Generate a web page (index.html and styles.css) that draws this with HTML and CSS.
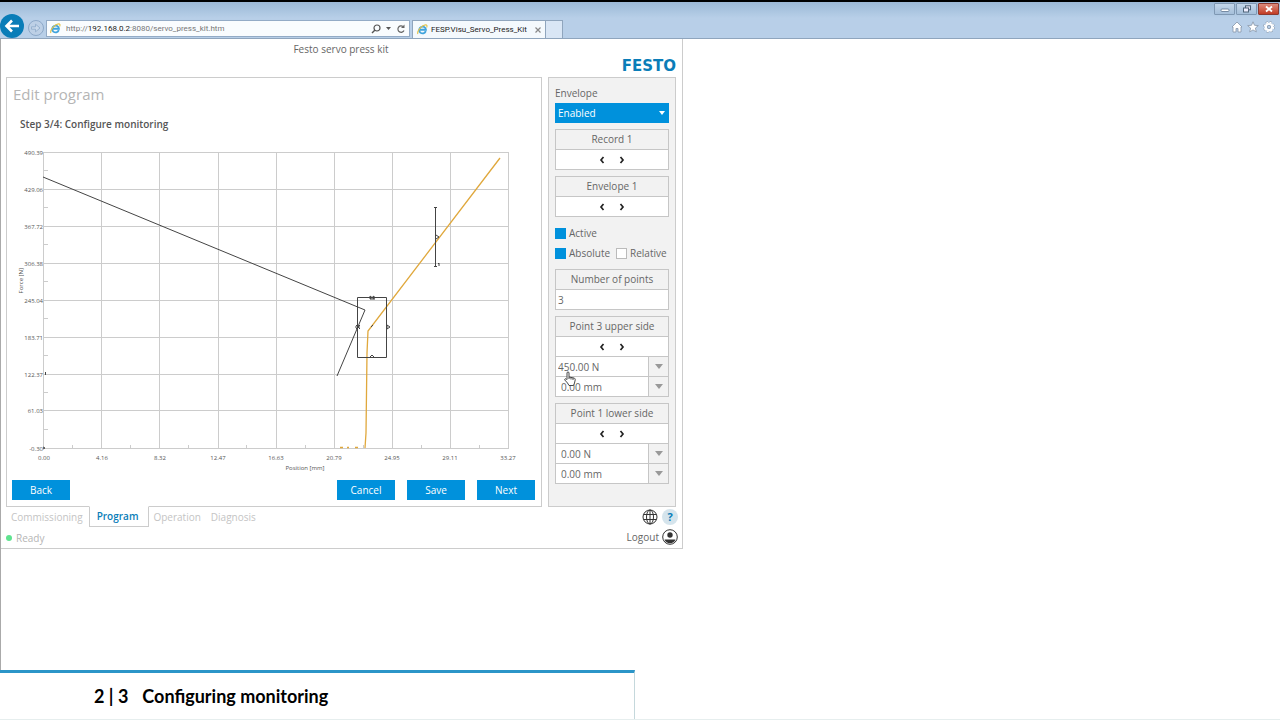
FILE: index.html
```html
<!DOCTYPE html>
<html lang="en">
<head>
    <meta charset="UTF-8">
    <meta name="viewport" content="width=device-width, initial-scale=1.0">
    <title>FESP.Visu_Servo_Press_Kit</title>
    <link rel="stylesheet" href="styles.css">
</head>
<body>
    <svg class="symbols" aria-hidden="true">
        <symbol id="ie" viewBox="0 0 12 12">
            <path d="M9.600 7.800A3.700 3.700 0 1 1 9.800 6.300H3" fill="none" stroke="#3fa3dc" stroke-width="2"/>
            <path d="M1 11C-.5 8 5 1.500 9 1c2-.3 2.300 1 1.500 2.800" fill="none" stroke="#e3c34a" stroke-width="1.200"/>
        </symbol>
        <symbol id="prev" viewBox="0 0 6 8">
            <path d="M4.500 1L2 4l2.500 3" fill="none" stroke="#222" stroke-width="1.700"/>
        </symbol>
        <symbol id="next" viewBox="0 0 6 8">
            <path d="M1.500 1L4 4 1.500 7" fill="none" stroke="#222" stroke-width="1.700"/>
        </symbol>
    </svg>

    <header class="browser">
        <nav class="browser-nav">
            <button type="button" class="nav-back" aria-label="Go back">
                <svg viewBox="0 0 24 24" width="24" height="24"><circle cx="12" cy="12" r="12" fill="#0a7db8"/><path d="M19 12H7M12 6.500L6.500 12l5.500 5.500" fill="none" stroke="#fff" stroke-width="2.600"/></svg>
            </button>
            <button type="button" class="nav-forward" aria-label="Go forward">
                <svg viewBox="0 0 18 18" width="18" height="18"><circle cx="9" cy="9" r="7.500" fill="#bdd0e6" stroke="#8da9c9"/><path d="M4.500 7.800h4V5.200L13 9l-4.500 3.800v-2.600h-4z" fill="#c9d9eb" stroke="#8da9c9" stroke-width=".8"/></svg>
            </button>
            <div class="address">
                <svg width="11" height="11"><use href="#ie"/></svg>
                <a class="url" href="#">http://<b>192.168.0.2</b>:8080/servo_press_kit.htm</a>
                <button type="button" aria-label="Search">
                    <svg viewBox="0 0 10 10" width="10" height="10"><circle cx="6" cy="4" r="3" fill="none" stroke="#555" stroke-width="1.200"/><path d="M4 6L1 9" stroke="#555" stroke-width="1.500"/></svg>
                </button>
                <button type="button" aria-label="Address list">
                    <svg viewBox="0 0 5 3" width="5" height="3"><path d="M0 0h5L2.500 3z" fill="#555"/></svg>
                </button>
                <button type="button" class="reload" aria-label="Refresh">
                    <svg viewBox="0 0 10 10" width="10" height="10"><path d="M8 6.500A3.200 3.200 0 1 1 7 2.500" fill="none" stroke="#666" stroke-width="1.200"/><path d="M8.500 .5v3.500H5z" fill="#666"/></svg>
                </button>
            </div>
            <div class="tab">
                <svg width="11" height="11"><use href="#ie"/></svg>
                <span class="tab-title">FESP.Visu_Servo_Press_Kit</span>
                <button type="button" aria-label="Close tab">
                    <svg viewBox="0 0 6 6" width="6" height="6"><path d="M.5.5l5 5M5.500.5l-5 5" stroke="#888" stroke-width="1.200"/></svg>
                </button>
            </div>
            <button type="button" class="new-tab" aria-label="New tab"></button>
        </nav>
        <div class="browser-side">
            <div class="window-buttons">
                <button type="button" aria-label="Minimize">
                    <svg viewBox="0 0 10 8" width="10" height="8"><rect x="1" y="4" width="8" height="2.500" rx="1" fill="#fff" stroke="#5d7590" stroke-width=".8"/></svg>
                </button>
                <button type="button" aria-label="Restore">
                    <svg viewBox="0 0 10 8" width="10" height="8"><rect x="3.500" y=".8" width="5" height="4" fill="#dde" stroke="#4f6479"/><rect x="1.500" y="3" width="5" height="4" fill="#eef" stroke="#4f6479"/></svg>
                </button>
                <button type="button" class="close" aria-label="Close">
                    <svg viewBox="0 0 8 8" width="8" height="8"><path d="M1 1.500l6 5M7 1.500l-6 5" stroke="#fff" stroke-width="1.800"/></svg>
                </button>
            </div>
            <div class="tools">
                <button type="button" aria-label="Home">
                    <svg viewBox="0 0 12 12" width="12" height="12"><path d="M6 1L1 6h1v5h3V7.500h2V11h3V6h1z" fill="#fff" stroke="#8796a8" stroke-width=".8"/></svg>
                </button>
                <button type="button" aria-label="Favorites">
                    <svg viewBox="0 0 12 12" width="12" height="12"><path d="M6 .8l1.500 3.500 3.800.3-2.900 2.500.9 3.800L6 8.900l-3.300 2 .9-3.800L.7 4.600l3.800-.3z" fill="#fff" stroke="#8796a8" stroke-width=".8"/></svg>
                </button>
                <button type="button" aria-label="Tools">
                    <svg viewBox="0 0 12 12" width="12" height="12"><circle cx="6" cy="6" r="4.500" fill="none" stroke="#8796a8" stroke-width="2.600" stroke-dasharray="2 1.530"/><circle cx="6" cy="6" r="3" fill="none" stroke="#fff" stroke-width="2.200"/><circle cx="6" cy="6" r="4.500" fill="none" stroke="#fff" stroke-width="1.500" stroke-dasharray="2 1.530"/><circle cx="6" cy="6" r="1.700" fill="#b6cde6" stroke="#8796a8" stroke-width=".8"/></svg>
                </button>
            </div>
        </div>
    </header>

    <main class="page">
        <div class="app">
            <header class="app-header">
                <h1>Festo servo press kit</h1>
                <div class="logo">FESTO</div>
            </header>

            <div class="panels">
                <section class="program">
                    <h2>Edit program</h2>
                    <h3>Step 3/4: Configure monitoring</h3>
                    <svg class="chart" viewBox="0 0 534 332" role="img" aria-label="Force over position">
                        <!-- grid -->
                        <path class="grid" d="M36.500 9v296M94.500 9v296M152.500 9v296M211.500 9v296M269.500 9v296M327.500 9v296M385.500 9v296M443.500 9v296M501.500 9v296"/>
                        <path class="grid" d="M36 9.500h466M36 46.500h466M36 83.500h466M36 120.500h466M36 157.500h466M36 194.500h466M36 231.500h466M36 267.500h466M36 305.500h466"/>
                        <path class="tick" d="M36 27.500h5M36 64.500h5M36 101.500h5M36 138.500h5M36 175.500h5M36 212.500h5M36 249.500h5M36 286.500h5"/>
                        <path class="tick" d="M65.500 305v-3M123.500 305v-3M181.500 305v-3M239.500 305v-3M298.500 305v-3M356.500 305v-3M414.500 305v-3M472.500 305v-3"/>
                        <!-- force axis -->
                        <g class="labels labels-y">
                            <text x="36" y="12">490.39</text>
                            <text x="36" y="49">429.06</text>
                            <text x="36" y="86">367.72</text>
                            <text x="36" y="123">306.38</text>
                            <text x="36" y="160">245.04</text>
                            <text x="36" y="197">183.71</text>
                            <text x="36" y="234">122.37</text>
                            <text x="36" y="270">61.03</text>
                            <text x="36" y="308">-0.30</text>
                            <text transform="translate(16 125) rotate(-90)">Force [N]</text>
                        </g>
                        <!-- position axis -->
                        <g class="labels labels-x">
                            <text x="37" y="317">0.00</text>
                            <text x="95" y="317">4.16</text>
                            <text x="153" y="317">8.32</text>
                            <text x="211" y="317">12.47</text>
                            <text x="269" y="317">16.63</text>
                            <text x="327" y="317">20.79</text>
                            <text x="385" y="317">24.95</text>
                            <text x="443" y="317">29.11</text>
                            <text x="501" y="317">33.27</text>
                            <text x="298" y="327">Position [mm]</text>
                        </g>
                        <!-- measured curve -->
                        <path class="curve" d="M493 15L361 188 360 210 359 290 358 305"/>
                        <path class="curve" d="M333 304.500h3M340 304.500h2M348 304.500h3"/>
                        <!-- envelope -->
                        <path class="limit" d="M36 34L358 167 330 233"/>
                        <!-- window -->
                        <path class="limit" d="M350.500 154.500h29v60h-29zM363 153l4 3M367 153l-4 3M363 156h5M363 153v3M367 153v3M349 182l4 4M353 182l-4 4M348 184h5M380 182l3 2-3 2zM363 214l2-2 2 2M364 184l2-2"/>
                        <!-- threshold -->
                        <path class="limit" d="M428.500 64v60M427 64.500h3M427 123.500h3M429 92l3 2-3 2M431 121l1-1v3M38.500 229v3M36 304l2 1-2 1"/>
                    </svg>
                    <div class="actions">
                        <button type="button" class="btn btn-back">Back</button>
                        <button type="button" class="btn">Cancel</button>
                        <button type="button" class="btn">Save</button>
                        <button type="button" class="btn">Next</button>
                    </div>
                </section>

                <aside class="settings">
                    <div class="envelope">
                        <label for="envelope">Envelope</label>
                        <div class="select">
                            <select id="envelope">
                                <option>Enabled</option>
                                <option>Disabled</option>
                            </select>
                        </div>
                    </div>

                    <div class="group">
                        <div class="group-title">Record 1</div>
                        <div class="stepper">
                            <button type="button" aria-label="Previous record"><svg width="6" height="8"><use href="#prev"/></svg></button>
                            <button type="button" aria-label="Next record"><svg width="6" height="8"><use href="#next"/></svg></button>
                        </div>
                    </div>

                    <div class="group">
                        <div class="group-title">Envelope 1</div>
                        <div class="stepper">
                            <button type="button" aria-label="Previous envelope"><svg width="6" height="8"><use href="#prev"/></svg></button>
                            <button type="button" aria-label="Next envelope"><svg width="6" height="8"><use href="#next"/></svg></button>
                        </div>
                    </div>

                    <div class="checks">
                        <label><input type="checkbox" checked>Active</label>
                        <label><input type="checkbox" checked>Absolute</label>
                        <label><input type="checkbox">Relative</label>
                    </div>

                    <div class="group">
                        <label class="group-title" for="points">Number of points</label>
                        <input type="text" id="points" class="value" value="3">
                    </div>

                    <div class="group">
                        <div class="group-title">Point 3 upper side</div>
                        <div class="stepper">
                            <button type="button" aria-label="Previous upper point"><svg width="6" height="8"><use href="#prev"/></svg></button>
                            <button type="button" aria-label="Next upper point"><svg width="6" height="8"><use href="#next"/></svg></button>
                        </div>
                        <div class="combo">
                            <input type="text" class="value" value="450.00 N" aria-label="Upper force">
                            <button type="button" aria-label="Upper force list"></button>
                            <svg class="cursor" viewBox="0 0 12 15" width="12" height="15"><path d="M3 8V2c0-1.500 2-1.500 2 0v4l5 1c1 .3 1.300 1 1.200 2l-.7 3-1 2.500H5L3.500 12 .8 9C.3 8 1.500 7.300 2.300 8l1 1M5 6v2M7 6.500v2M9 7v2" fill="#fff" stroke="#333" stroke-width=".9"/></svg>
                        </div>
                        <div class="combo">
                            <input type="text" class="value value-inset" value="0.00 mm" aria-label="Upper position">
                            <button type="button" aria-label="Upper position list"></button>
                        </div>
                    </div>

                    <div class="group">
                        <div class="group-title">Point 1 lower side</div>
                        <div class="stepper">
                            <button type="button" aria-label="Previous lower point"><svg width="6" height="8"><use href="#prev"/></svg></button>
                            <button type="button" aria-label="Next lower point"><svg width="6" height="8"><use href="#next"/></svg></button>
                        </div>
                        <div class="combo">
                            <input type="text" class="value value-inset" value="0.00 N" aria-label="Lower force">
                            <button type="button" aria-label="Lower force list"></button>
                        </div>
                        <div class="combo">
                            <input type="text" class="value value-inset" value="0.00 mm" aria-label="Lower position">
                            <button type="button" aria-label="Lower position list"></button>
                        </div>
                    </div>
                </aside>
            </div>

            <footer class="app-footer">
                <div class="footer-left">
                    <nav class="menu">
                        <a href="#">Commissioning</a>
                        <a href="#" class="active">Program</a>
                        <a href="#">Operation</a>
                        <a href="#">Diagnosis</a>
                    </nav>
                    <div class="status">Ready</div>
                </div>
                <div class="footer-right">
                    <div class="footer-icons">
                        <button type="button" aria-label="Language">
                            <svg viewBox="0 0 16 16" width="16" height="16"><g fill="none" stroke="#333"><circle cx="8" cy="8" r="7"/><ellipse cx="8" cy="8" rx="3.500" ry="7"/><path d="M8 1v14M1.500 5.500h13M1.500 10.500h13"/></g></svg>
                        </button>
                        <button type="button" class="help">?</button>
                    </div>
                    <a href="#" class="logout">Logout
                        <svg viewBox="0 0 16 16" width="16" height="16"><circle cx="8" cy="8" r="7.300" fill="#fff" stroke="#333"/><circle cx="8" cy="6" r="2.700" fill="#333"/><path d="M2.500 10.500h11A6 6 0 0 1 8 14.300a6 6 0 0 1-5.500-3.800z" fill="#333"/></svg>
                    </a>
                </div>
            </footer>
        </div>
    </main>

    <footer class="caption">
        <div class="caption-text"><span>2 | 3</span><span>Configuring monitoring</span></div>
    </footer>
</body>
</html>
```

FILE: styles.css
```css
* {
    box-sizing: border-box;
}
body {
    display: flex;
    flex-direction: column;
    min-height: 100vh;
    margin: 0;
    background: #fff;
    color: #666;
    font-family: "Open Sans", "Noto Sans", sans-serif;
    font-size: 10px;
    line-height: 16px;
}
button, input, select {
    margin: 0;
    padding: 0;
    border: 0;
    border-radius: 0;
    background: none;
    color: inherit;
    font: inherit;
}
button {
    cursor: pointer;
}
svg {
    display: block;
}
a {
    color: inherit;
    text-decoration: none;
}
h1, h2, h3 {
    margin: 0;
}
.symbols {
    position: absolute;
    width: 0;
    height: 0;
}

/* browser window */
.browser {
    display: flex;
    justify-content: space-between;
    height: 39px;
    border-top: 2px solid #000;
    border-bottom: 1px solid #8fa5bd;
    background: linear-gradient(#9db9d6, #a9c4df 8px, #b8cfe8 16px, #b8cfe8);
}
.browser-nav {
    display: flex;
    align-items: flex-end;
    flex: 1;
    min-width: 0;
}
.nav-forward {
    margin: 0 1px 1px 3px;
}
.address {
    display: flex;
    align-items: center;
    gap: 5px;
    flex: 0 1 364px;
    height: 17px;
    margin: 0 2px 1px 0;
    padding: 0 3px;
    border: 1px solid #93abc6;
    background: #f9fcfe;
    font-family: Roboto, sans-serif;
    font-size: 8px;
    min-width: 0;
}
.url {
    flex: 1;
    color: #777;
    white-space: nowrap;
    overflow: hidden;
}
.url b {
    color: #222;
    font-weight: normal;
}
.tab {
    display: flex;
    align-items: center;
    gap: 3px;
    flex: 0 1 134px;
    height: 18px;
    padding: 0 4px;
    border: 1px solid #8fa5bd;
    border-bottom: 0;
    background: #f4f9fd;
    color: #222;
    font-family: Roboto, sans-serif;
    font-size: 8px;
}
.tab-title {
    flex: 1;
    white-space: nowrap;
}
.new-tab {
    width: 17px;
    height: 18px;
    border: 1px solid #8fa5bd;
    border-width: 1px 1px 0 0;
    background: #d9e6f5;
}
.browser-side {
    display: flex;
    flex-direction: column;
    align-items: flex-end;
    gap: 6px;
    padding: 1px 1px 0 0;
}
.window-buttons {
    display: flex;
    gap: 1px;
}
.window-buttons button {
    display: flex;
    align-items: center;
    justify-content: center;
    width: 21px;
    height: 12px;
    border: 1px solid #7f98b3;
    border-radius: 1px;
    background: linear-gradient(#c3d6ea, #a5bfda);
}
.window-buttons .close {
    border-color: #8c3a30;
    background: linear-gradient(#dc8b7c, #c23c25);
}
.tools {
    display: flex;
    gap: 4px;
    padding-right: 4px;
}

/* visualisation */
.page {
    flex: 1;
    border-left: 1px solid #aaa;
}
.app {
    width: 100%;
    max-width: 682px;
    padding: 0 6px 0 5px;
    border: 1px solid #ccc;
    border-width: 0 1px 1px 0;
}
.app-header {
    padding-top: 2px;
}
h1 {
    font-size: 10px;
    font-weight: normal;
    line-height: 16px;
    text-align: center;
}
.logo {
    height: 20px;
    color: #0a7db8;
    font-family: "DejaVu Sans", sans-serif;
    font-size: 15px;
    font-weight: bold;
    line-height: 18px;
    text-align: right;
}
.panels {
    display: flex;
    gap: 6px;
}
.program {
    display: flex;
    flex-direction: column;
    flex: 1;
    min-width: 0;
    border: 1px solid #ccc;
}
h2 {
    padding: 5px 6px 0;
    color: #b5b5b5;
    font-size: 15px;
    font-weight: normal;
    line-height: 22px;
}
h3 {
    padding: 11px 13px 0;
    color: #555;
    font-size: 10px;
    font-weight: 600;
    line-height: 16px;
}
.chart {
    width: 100%;
    margin-top: 11px;
}
.grid, .tick {
    fill: none;
    stroke: #ccc;
}
.labels {
    fill: #555;
    font-size: 6px;
}
.labels-y {
    text-anchor: end;
}
.labels-x {
    text-anchor: middle;
}
.curve {
    fill: none;
    stroke: #e0a83c;
    stroke-width: 1.3;
}
.limit {
    fill: none;
    stroke: #444;
}
.actions {
    display: flex;
    gap: 12px;
    margin-top: auto;
    padding: 5px 6px 6px 5px;
}
.btn {
    width: 58px;
    height: 20px;
    background: #0091dc;
    color: #fff;
}
.btn-back {
    margin-right: auto;
}

/* settings column */
.settings {
    display: flex;
    flex-direction: column;
    gap: 6px;
    width: 128px;
    padding: 7px 6px 22px;
    border: 1px solid #ccc;
    background: #f2f2f2;
}
.envelope label {
    display: block;
    height: 18px;
}
.select {
    position: relative;
}
.select select {
    width: 100%;
    height: 20px;
    padding: 0 3px;
    appearance: none;
    background: #0091dc;
    color: #fff;
}
.select::after {
    content: "";
    position: absolute;
    top: 8px;
    right: 4px;
    border: 3px solid transparent;
    border-top: 4px solid #fff;
    border-bottom: 0;
    pointer-events: none;
}
.group {
    display: flex;
    flex-direction: column;
    gap: 1px;
    border: 1px solid #c6c6c6;
    background: #c6c6c6;
}
.group-title {
    height: 19px;
    background: #f2f2f2;
    line-height: 19px;
    text-align: center;
}
.stepper {
    display: flex;
    align-items: center;
    justify-content: center;
    gap: 14px;
    height: 19px;
    background: #fff;
}
.checks {
    display: flex;
    flex-wrap: wrap;
    column-gap: 6px;
}
.checks label {
    display: flex;
    align-items: center;
    gap: 3px;
    height: 20px;
}
.checks label:first-child {
    width: 100%;
}
.checks input {
    width: 11px;
    height: 11px;
    appearance: none;
    border: 1px solid #bbb;
    background: #fff;
}
.checks input:checked {
    border-color: #0091dc;
    background: #0091dc;
}
.value {
    width: 100%;
    min-width: 0;
    height: 19px;
    padding: 0 2px;
    background: #fff;
}
.value-inset {
    padding-left: 5px;
}
.combo {
    position: relative;
    display: flex;
    gap: 1px;
}
.combo button {
    display: flex;
    align-items: center;
    justify-content: center;
    flex: 0 0 19px;
    background: #f2f2f2;
}
.combo button::before {
    content: "";
    border: 4px solid transparent;
    border-top: 5px solid #999;
    border-bottom: 0;
}
.cursor {
    position: absolute;
    top: 14px;
    left: 8px;
    z-index: 1;
}

/* bottom bar */
.app-footer {
    display: flex;
    justify-content: space-between;
}
.menu {
    display: flex;
    padding-left: 5px;
    color: #c4c4c4;
}
.menu a {
    height: 20px;
    padding-right: 10px;
    line-height: 20px;
}
.menu .active {
    height: 21px;
    margin: -1px 4px 0 -4px;
    padding: 0 10px 0 7px;
    border: 1px solid #ccc;
    border-top-color: #fff;
    background: #fff;
    color: #0a7db8;
    font-weight: 600;
    line-height: 18px;
}
.status {
    display: flex;
    align-items: center;
    gap: 4px;
    height: 21px;
    color: #b5b5b5;
}
.status::before {
    content: "";
    width: 6px;
    height: 6px;
    border-radius: 50%;
    background: #5fe38f;
}
.footer-right {
    display: flex;
    flex-direction: column;
    align-items: flex-end;
    gap: 4px;
    margin-right: -2px;
    padding-top: 2px;
}
.footer-icons {
    display: flex;
    gap: 4px;
}
.help {
    width: 16px;
    height: 16px;
    border-radius: 50%;
    background: #d5e4ec;
    color: #0a7db8;
    font-size: 11px;
    font-weight: bold;
}
.logout {
    display: flex;
    gap: 3px;
}

/* chapter caption */
.caption {
    border-bottom: 1px solid #e6eeee;
}
.caption-text {
    display: flex;
    gap: 14px;
    width: 100%;
    max-width: 635px;
    padding: 11px 94px;
    border-top: 3px solid #2b95c8;
    border-right: 1px solid #c5d8dc;
    background: #fff;
    color: #000;
    font-family: Lato, sans-serif;
    font-size: 18px;
    font-weight: bold;
    line-height: 24px;
}
```
